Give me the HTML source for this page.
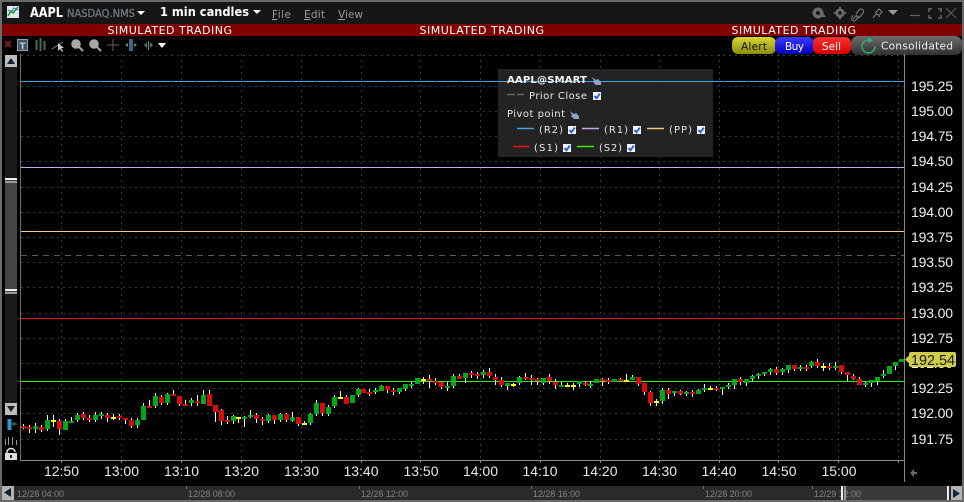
<!DOCTYPE html>
<html><head><meta charset="utf-8"><title>AAPL</title>
<style>
html,body{margin:0;padding:0;background:#000;width:964px;height:502px;overflow:hidden}
svg{display:block}
text{font-family:"DejaVu Sans","Liberation Sans",sans-serif;white-space:pre}
.a{font-family:"Liberation Sans",sans-serif}
.p{font-family:"Liberation Sans",sans-serif;font-size:14px;fill:#f0f0f0}
.t{font-family:"Liberation Sans",sans-serif;font-size:14px;fill:#e8e8e8;text-anchor:middle}
.d{font-family:"Liberation Sans",sans-serif;font-size:9.5px;fill:#858585}
.s{font-size:11px;fill:#fff}
.l{font-size:10px;fill:#e8e8e8}
</style></head><body>
<svg xmlns="http://www.w3.org/2000/svg" width="964" height="502" viewBox="0 0 964 502">
<defs>
<linearGradient id="gy" x1="0" y1="0" x2="0" y2="1"><stop offset="0" stop-color="#d8d830"/><stop offset="1" stop-color="#8c8c10"/></linearGradient>
<linearGradient id="gb" x1="0" y1="0" x2="0" y2="1"><stop offset="0" stop-color="#3a3aff"/><stop offset="1" stop-color="#0000b8"/></linearGradient>
<linearGradient id="gr" x1="0" y1="0" x2="0" y2="1"><stop offset="0" stop-color="#ff3030"/><stop offset="1" stop-color="#d80000"/></linearGradient>
<linearGradient id="gc" x1="0" y1="0" x2="0" y2="1"><stop offset="0" stop-color="#6c6c6c"/><stop offset="1" stop-color="#303030"/></linearGradient>
<g id="ck"><rect width="8" height="8" fill="#eef2fa"/><path d="M1.5 4l2 2.3L6.8 1.6" fill="none" stroke="#1f5fd8" stroke-width="1.8"/></g>
<g id="hd"><path d="M0 1l4 3 2-1 3 3v3H4L1 6l1-1z" fill="#8aa6cc"/></g>
</defs>

<!-- frame -->
<rect width="964" height="502" fill="#6a6a6a"/>
<rect x="2" y="2" width="960" height="22" fill="#161616"/>
<rect x="2" y="24" width="960" height="12" fill="#800000"/>
<rect x="2" y="36" width="960" height="450" fill="#000"/>
<rect x="2" y="486" width="960" height="14" fill="#2a2a2a"/>

<!-- title bar -->
<rect x="7" y="6" width="12" height="12" fill="#dfe6ee"/>
<path d="M8 16l3-5 2 2 5-6" fill="none" stroke="#1c9c30" stroke-width="1.6"/>
<path d="M8 10l3 2 3-4 4 2" fill="none" stroke="#3a6fc0" stroke-width="1"/>
<text x="30" y="17" font-size="13" font-weight="700" fill="#fff" textLength="33" lengthAdjust="spacingAndGlyphs">AAPL</text>
<text x="67" y="17" font-size="10.5" fill="#6c7781" stroke="#6c7781" stroke-width=".35" textLength="68" lengthAdjust="spacingAndGlyphs">NASDAQ.NMS</text>
<path d="M137 11h8l-4 4z" fill="#fff"/>
<text x="160" y="16" font-size="12.5" font-weight="700" fill="#fff" textLength="89" lengthAdjust="spacingAndGlyphs">1 min candles</text>
<path d="M253 10h8l-4 4z" fill="#fff"/>
<text x="272" y="18" font-size="10.5" fill="#9a9a9a" textLength="19"><tspan text-decoration="underline">F</tspan>ile</text>
<text x="304" y="18" font-size="10.5" fill="#9a9a9a" textLength="21"><tspan text-decoration="underline">E</tspan>dit</text>
<text x="338" y="18" font-size="10.5" fill="#9a9a9a" textLength="25"><tspan text-decoration="underline">V</tspan>iew</text>

<!-- window icons -->
<g fill="#6a6a6a">
<circle cx="818" cy="13" r="5.5"/><circle cx="818" cy="13" r="2" fill="#161616"/><path d="M821 17h5l-3-4z"/>
<circle cx="840" cy="13" r="4.6"/><circle cx="840" cy="13" r="1.8" fill="#161616"/><path d="M839 6.8h2v2h-2zM839 17.2h2v2h-2zM833.800 12h2v2h-2zM844.200 12h2v2h-2z"/>
<path d="M888 10h10l-5 5z" fill="#999"/>
</g>
<path d="M853 19l4-4m-1-1l3-4a2.500 2.500 0 0 1 4 3l-3 4a2.500 2.500 0 0 1-4-2m-3 0l-1 2a2.500 2.500 0 0 0 4 3l3-4" fill="none" stroke="#777" stroke-width="1.100"/>
<path d="M873 18l3-4m-1-2l5 5m-4-5l3-3 3 3-3 3" fill="none" stroke="#777" stroke-width="1.200"/>
<path d="M910 15.500h10" stroke="#666" stroke-width="1.200"/>
<path d="M929 12V9h3M938 9h3v3M941 15v3h-3M932 18h-3v-3" fill="none" stroke="#555" stroke-width="2"/>
<path d="M946 8l10 10M956 8l-10 10" stroke="#5c5c5c" stroke-width="1.100"/>

<!-- band -->
<text class="s" x="107.500" y="34" textLength="124.500">SIMULATED TRADING</text>
<text class="s" x="419.500" y="34" textLength="124.500">SIMULATED TRADING</text>
<text class="s" x="731.500" y="34" textLength="124.500">SIMULATED TRADING</text>

<!-- toolbar -->
<path d="M5 41l6 6M11 41l-6 6" stroke="#7a2020" stroke-width="2"/>
<rect x="17.500" y="39.500" width="10" height="11" fill="#3f5666" stroke="#8aa" stroke-width="1"/>
<text x="19.500" y="49" font-size="9" font-weight="700" fill="#b9cbd6">T</text>
<path d="M36.500 40v10M40.500 38v13M44.500 41v9" stroke="#486a58" stroke-width="2"/>
<path d="M52 49l11-7" stroke="#888" stroke-width="1"/><path d="M58 43v8l2-2 2 3 1-1-2-3h3z" fill="#ccc"/>
<circle cx="76" cy="44" r="4.800" fill="#a8a8a8"/><path d="M79 47l4 4" stroke="#a8a8a8" stroke-width="2"/>
<circle cx="94" cy="44" r="4.800" fill="#a8a8a8"/><path d="M97 47l4 4" stroke="#a8a8a8" stroke-width="2"/>
<path d="M113 39v12M107 45h12" stroke="#74624e" stroke-width="1"/>
<rect x="129" y="39" width="4" height="12" fill="#3e6a80"/><path d="M128 43v4l-3-2zM134 43v4l3-2z" fill="#6a8a70"/>
<rect x="148" y="41" width="1" height="9" fill="#5a8a9a"/><path d="M147 42v6l-3-3zM150 42v6l3-3z" fill="#4a7a70"/>
<path d="M158 43h8l-4 5z" fill="#fff"/>

<!-- order buttons -->
<rect x="732" y="37" width="44" height="17" rx="6" fill="url(#gy)"/>
<rect x="775" y="37" width="39" height="17" rx="6" fill="url(#gb)"/>
<rect x="813" y="37" width="38" height="17" rx="6" fill="url(#gr)"/>
<rect x="851" y="36" width="111" height="19" rx="7" fill="url(#gc)"/>
<text x="741" y="50" font-size="10.500" fill="#111" textLength="26">Alert</text>
<text x="785" y="50" font-size="10.500" fill="#fff" textLength="19">Buy</text>
<text x="822" y="50" font-size="10.500" fill="#fff" textLength="19">Sell</text>
<text x="881" y="49.500" font-size="10.500" fill="#f0f0f0" textLength="72">Consolidated</text>
<path d="M872 41a6.500 6.500 0 1 0 3 5" fill="none" stroke="#2fae6e" stroke-width="1.500"/><path d="M868 36.500l5 4-5 2.500z" fill="#2fae6e"/>

<!-- left scrollbar -->
<rect x="5" y="67" width="12" height="336" fill="#1a1a1a"/>
<rect x="5" y="178" width="12" height="114" fill="#444"/>
<rect x="5" y="178" width="12" height="2" fill="#f0f0f0"/><rect x="5" y="181" width="12" height="2" fill="#999"/>
<rect x="5" y="289" width="12" height="2" fill="#f0f0f0"/><rect x="5" y="292" width="12" height="2" fill="#999"/>
<rect x="5" y="55" width="12" height="12" fill="#bdbdbd"/><path d="M7 64l4-6 4 6z" fill="#10222e"/>
<rect x="5" y="403" width="12" height="12" fill="#bdbdbd"/><path d="M7 406h8l-4 6z" fill="#10222e"/>
<rect x="7.500" y="419" width="4" height="11" fill="#3a8fd0"/><path d="M11 424h6M14 422v4" stroke="#2a9a5a" stroke-width="1"/>
<path d="M5.500 445v-6M8.500 445v-8M12.500 445v-8M16.500 445v-5" stroke="#999" stroke-width="1"/>
<path d="M7 453v-1a4 3.500 0 0 1 8 0" fill="none" stroke="#ddd" stroke-width="1.500"/><rect x="5" y="453" width="12" height="7" fill="#ddd"/><rect x="10" y="455" width="2" height="3" fill="#222"/>

<!-- grid -->
<g stroke="#3a3a3a" stroke-width="1" stroke-dasharray="2 4" fill="none" shape-rendering="crispEdges">
<path d="M21 55.500H904M21 86.500H904M21 111.500H904M21 136.500H904M21 161.500H904M21 187.500H904M21 212.500H904M21 237.500H904M21 262.500H904M21 287.500H904M21 313.500H904M21 338.500H904M21 363.500H904M21 388.500H904M21 413.500H904M21 439.500H904"/>
<path d="M61.500 54V460M121.500 54V460M181.500 54V460M241.500 54V460M301.500 54V460M361.500 54V460M420.500 54V460M480.500 54V460M540.500 54V460M600.500 54V460M659.500 54V460M719.500 54V460M778.500 54V460M838.500 54V460M898.500 54V460"/>
</g>

<!-- legend panel -->
<rect x="498" y="69" width="215" height="88" fill="#262626" opacity=".93"/>

<!-- price lines -->
<g shape-rendering="crispEdges" stroke-width="1">
<path d="M21 81.500H904" stroke="#3fa3e6"/>
<path d="M21 167.500H904" stroke="#c9a4f2"/>
<path d="M21 231.500H904" stroke="#f7c87c"/>
<path d="M21 255.500H904" stroke="#5a5a5a" stroke-dasharray="6 5"/>
<path d="M21 318.500H904" stroke="#f01010"/>
<path d="M21 381.500H904" stroke="#33f010"/>
</g>

<!-- legend content -->
<text x="507" y="83" font-size="10" font-weight="700" fill="#f2f2f2" textLength="80" lengthAdjust="spacingAndGlyphs">AAPL@SMART</text>
<use href="#hd" x="592" y="76"/>
<path d="M507 94.500h8M517 94.500h7" stroke="#666" stroke-width="1.500"/>
<text class="l" x="529" y="99" textLength="58">Prior Close</text>
<use href="#ck" x="593" y="92"/>
<text class="l" x="507" y="117" textLength="58">Pivot point</text>
<use href="#hd" x="570" y="110"/>
<path d="M517 128.500h17" stroke="#3fa3e6" stroke-width="1.500"/>
<text class="l" x="539" y="133" textLength="24">(R2)</text><use href="#ck" x="568" y="126"/>
<path d="M582 128.500h17" stroke="#c9a4f2" stroke-width="1.500"/>
<text class="l" x="604" y="133" textLength="24">(R1)</text><use href="#ck" x="633" y="126"/>
<path d="M647 128.500h17" stroke="#f7c87c" stroke-width="1.500"/>
<text class="l" x="669" y="133" textLength="23">(PP)</text><use href="#ck" x="697" y="126"/>
<path d="M513 146.500h17" stroke="#f01010" stroke-width="1.500"/>
<text class="l" x="534" y="151" textLength="24">(S1)</text><use href="#ck" x="563" y="144"/>
<path d="M577 146.500h17" stroke="#33f010" stroke-width="1.500"/>
<text class="l" x="599" y="151" textLength="23">(S2)</text><use href="#ck" x="627" y="144"/>

<!-- wicks -->
<path shape-rendering="crispEdges" fill="none" stroke="#f4f4f4" stroke-width="1" d="M23.500 424V429M29.500 425V433M35.500 423V433M41.500 425V432M47.500 415V431M53.500 415V427M59.500 419V435M65.500 419V430M71.500 417V423M77.500 413V422M83.500 412V420M89.500 415V422M95.500 412V422M101.500 412V419M107.500 413V422M113.500 414V420M119.500 414V420M125.500 418V424M131.500 418V428M137.500 418V428M143.500 403V420M149.500 400V408M155.500 393V408M161.500 395V405M167.500 393V405M173.500 390V396M179.500 396V406M185.500 400V406M191.500 398V406M197.500 395V406M203.500 390V404M209.500 390V406M215.500 405V422M221.500 409V425M227.500 416V424M233.500 415V424M238.500 417V423
M244.500 416V427M250.500 410V418M256.500 413V423M262.500 417V425M268.500 414V423M274.500 415V424M280.500 413V422M286.500 413V422M292.500 412V422M298.500 417V426M304.500 421V425M310.500 413V425M316.500 400V416M322.500 403V416M328.500 405V416M334.500 395V408M340.500 391V399M346.500 395V404M352.500 395V403M358.500 388V397M363.500 389V393M369.500 389V396M375.500 388V394M381.500 385V391M387.500 386V393M393.500 388V395M399.500 388V394M405.500 384V391M411.500 382V388M417.500 378V384M423.500 377V384M429.500 375V388M435.500 378V385M441.500 382V389M447.500 382V391M453.500 374V388M459.500 374V379M465.500 373V383M471.500 371V378M477.500 372V379
M483.500 370V378M489.500 368V378M495.500 374V385M501.500 377V387M507.500 383V390M513.500 383V387M519.500 376V385M525.500 373V380M531.500 375V385M537.500 378V385M543.500 378V385M549.500 374V384M555.500 379V389M561.500 382V387M567.500 383V387M573.500 383V390M579.500 381V387M585.500 381V386M590.500 381V388M596.500 379V383M602.500 378V386M608.500 378V384M614.500 379V382M620.500 378V381M626.500 374V381M632.500 375V380M638.500 377V386M644.500 383V395M650.500 391V406M656.500 399V406M662.500 388V404M668.500 388V399M674.500 391V396M680.500 390V395M686.500 391V396M692.500 390V397M698.500 389V394M704.500 384V392M710.500 386V390M716.500 386V391
M722.500 387V395M728.500 383V389M734.500 379V389M740.500 377V385M746.500 379V386M752.500 375V381M758.500 373V379M764.500 372V376M770.500 368V375M776.500 367V375M782.500 368V375M788.500 365V373M794.500 365V371M800.500 365V371M806.500 365V371M811.500 361V368M817.500 359V368M823.500 363V371M829.500 363V370M835.500 362V370M841.500 365V374M847.500 372V381M853.500 374V380M859.500 377V385M865.500 382V387M871.500 380V387M877.500 377V385M883.500 370V378M889.500 366V374M895.500 362V370"/>

<!-- green bodies -->
<path shape-rendering="crispEdges" fill="none" stroke="#00a814" stroke-width="5" d="M35.500 426V429M47.500 420V429M65.500 421V430M71.500 421V423M77.500 415V420M95.500 415V420M101.500 414V416M137.500 420V425M143.500 406V420M155.500 396V406M167.500 394V403M191.500 400V403M203.500 395V404M233.500 416V421M244.500 417V419M250.500 415V417M268.500 415V421M280.500 414V420M292.500 417V421M310.500 414V423M316.500 403V414M328.500 407V414M334.500 397V406M352.500 395V403M358.500 389V395M375.500 390V392M381.500 386V391M399.500 388V392M405.500 384V389M411.500 384V386M417.500 378V384M447.500 386V388M453.500 376V386M465.500 373V378M483.500 372V375M507.500 383V386M519.500 377V383M543.500 378V383M561.500 385V387M579.500 381V384M590.500 384V386M596.500 379V383M614.500 379V382M632.500 377V380M662.500 390V401M674.500 391V393M686.500 392V394M698.500 390V394M704.500 388V390M722.500 387V389M728.500 385V387M734.500 379V385M746.500 379V383M752.500 376V379M758.500 374V376M764.500 372V374M770.500 369V372M782.500 369V372M788.500 365V370M800.500 367V369M811.500 362V366M835.500 366V368M865.500 383V385M871.500 380V383M877.500 377V381M883.500 374V376M889.500 366V374M895.500 362V366M901.500 359V362"/>

<!-- red bodies -->
<path shape-rendering="crispEdges" fill="none" stroke="#d80a0a" stroke-width="5" d="M23.500 426V428M29.500 427V429M41.500 427V430M59.500 421V429M83.500 414V418M89.500 418V420M107.500 415V418M119.500 416V418M125.500 418V420M131.500 420V426M149.500 406V408M161.500 397V403M173.500 394V396M179.500 396V404M185.500 404V406M197.500 401V403M209.500 394V406M215.500 405V412M221.500 410V421M227.500 420V422M256.500 415V419M262.500 419V421M274.500 415V420M286.500 414V420M298.500 417V424M322.500 403V413M346.500 397V404M363.500 389V393M369.500 392V394M387.500 386V390M393.500 390V392M429.500 379V381M435.500 381V383M441.500 382V387M459.500 376V379M471.500 373V375M477.500 374V376M489.500 372V376M495.500 377V380M501.500 380V385M525.500 377V379M531.500 378V380M537.500 379V381M549.500 377V381M555.500 382V385M585.500 383V385M602.500 379V381M608.500 380V382M620.500 379V381M638.500 377V384M644.500 383V392M650.500 392V403M668.500 390V394M680.500 391V394M692.500 392V394M716.500 388V390M740.500 379V382M776.500 369V373M794.500 365V369M806.500 367V369M817.500 362V366M829.500 366V368M841.500 365V372M847.500 372V375M853.500 376V379M859.500 379V385"/>

<!-- yellow bodies -->
<path shape-rendering="crispEdges" fill="none" stroke="#ffff10" stroke-width="5" d="M53.500 420V422M113.500 417V419M238.500 417V419M304.500 423V425M340.500 397V399M423.500 379V381M513.500 384V386M567.500 385V387M573.500 385V387M626.500 380V382M656.500 401V403M710.500 388V390M823.500 366V368"/>

<!-- axes -->
<g shape-rendering="crispEdges">
<rect x="20" y="54" width="1" height="407" fill="#707070"/>
<rect x="20" y="460" width="885" height="1" fill="#8a8a8a"/>
<rect x="904" y="54" width="1" height="428" fill="#8a8a8a"/>
<path d="M61.500 461v2M121.500 461v2M181.500 461v2M241.500 461v2M301.500 461v2M361.500 461v2M420.500 461v2M480.500 461v2M540.500 461v2M600.500 461v2M659.500 461v2M719.500 461v2M778.500 461v2M838.500 461v2M898.500 461v2" stroke="#8a8a8a"/>
</g>

<!-- price labels -->
<text class="p" x="911" y="91" textLength="42">195.25</text>
<text class="p" x="911" y="116" textLength="42">195.00</text>
<text class="p" x="911" y="141" textLength="42">194.75</text>
<text class="p" x="911" y="166" textLength="42">194.50</text>
<text class="p" x="911" y="192" textLength="42">194.25</text>
<text class="p" x="911" y="217" textLength="42">194.00</text>
<text class="p" x="911" y="242" textLength="42">193.75</text>
<text class="p" x="911" y="267" textLength="42">193.50</text>
<text class="p" x="911" y="292" textLength="42">193.25</text>
<text class="p" x="911" y="318" textLength="42">193.00</text>
<text class="p" x="911" y="343" textLength="42">192.75</text>
<text class="p" x="911" y="393" textLength="42">192.25</text>
<text class="p" x="911" y="418" textLength="42">192.00</text>
<text class="p" x="911" y="444" textLength="42">191.75</text>
<text class="p" x="911" y="368" textLength="42">192.50</text>
<path d="M905 359.500l4-4v-1.500a2 2 0 0 1 2-2h43a2 2 0 0 1 2 2v11a2 2 0 0 1-2 2h-43a2 2 0 0 1-2-2v-1.500z" fill="#cdcd48"/>
<text x="911" y="365" class="a" font-size="15" fill="#1a1a10" textLength="44" lengthAdjust="spacingAndGlyphs">192.54</text>

<!-- time labels -->
<text class="t" x="61.500" y="476">12:50</text>
<text class="t" x="121.500" y="476">13:00</text>
<text class="t" x="181.500" y="476">13:10</text>
<text class="t" x="241.500" y="476">13:20</text>
<text class="t" x="301.500" y="476">13:30</text>
<text class="t" x="361" y="476">13:40</text>
<text class="t" x="421" y="476">13:50</text>
<text class="t" x="480.500" y="476">14:00</text>
<text class="t" x="540" y="476">14:10</text>
<text class="t" x="600" y="476">14:20</text>
<text class="t" x="659.500" y="476">14:30</text>
<text class="t" x="719" y="476">14:40</text>
<text class="t" x="779" y="476">14:50</text>
<text class="t" x="839" y="476">15:00</text>
<path d="M910 473l4-4v3h3v2h-3v3z" fill="#6a6a6a"/>

<!-- bottom navigator -->
<rect x="842" y="486" width="107" height="14" fill="#3a3a3a"/>
<rect x="2" y="486" width="12" height="14" fill="#b4b4b4"/><path d="M11 488v9l-7-4.500z" fill="#102030"/>
<path d="M186.500 486v3M359.500 486v3M531.500 486v3M703.500 486v3M812.500 486v3" stroke="#777" stroke-width="1"/>
<text class="d" x="17" y="497" textLength="47" lengthAdjust="spacingAndGlyphs">12/28 04:00</text>
<text class="d" x="188" y="497" textLength="47" lengthAdjust="spacingAndGlyphs">12/28 08:00</text>
<text class="d" x="361" y="497" textLength="47" lengthAdjust="spacingAndGlyphs">12/28 12:00</text>
<text class="d" x="533" y="497" textLength="47" lengthAdjust="spacingAndGlyphs">12/28 16:00</text>
<text class="d" x="705" y="497" textLength="47" lengthAdjust="spacingAndGlyphs">12/28 20:00</text>
<text class="d" x="814" y="497" textLength="47" lengthAdjust="spacingAndGlyphs">12/29 12:00</text>
<rect x="841" y="486" width="2" height="14" fill="#eee"/><rect x="844" y="486" width="2" height="14" fill="#999"/>
<rect x="947" y="486" width="2" height="14" fill="#eee"/>
<rect x="951" y="486" width="11" height="14" fill="#b4b4b4"/><path d="M953 489v9l7-4.500z" fill="#102a44"/>
</svg>
</body></html>
